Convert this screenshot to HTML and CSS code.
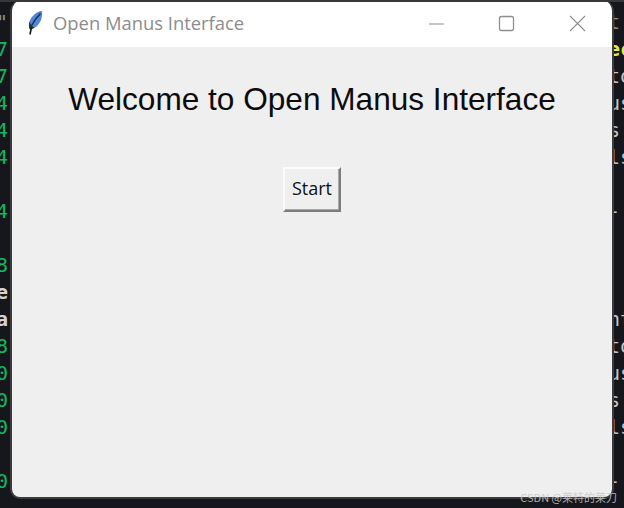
FILE: index.html
```html
<!DOCTYPE html>
<html lang="en">
<head>
<meta charset="utf-8">
<title>Open Manus Interface</title>
<link rel="stylesheet" href="styles.css">
</head>
<body>
<div class="terminal">
  <div class="line"><span class="muted">"</span><span class="muted">t :</span></div>
  <div class="line"><span class="num">7</span><span class="warn">ec</span></div>
  <div class="line"><span class="num">7</span><span class="text">to</span></div>
  <div class="line"><span class="num">4</span><span class="text">us</span></div>
  <div class="line"><span class="num">4</span><span class="text">s</span></div>
  <div class="line"><span class="num">4</span><span class="text">ls</span></div>
  <div class="line"></div>
  <div class="line"><span class="num">4</span><span class="text">-</span></div>
  <div class="line"></div>
  <div class="line"><span class="num">8</span></div>
  <div class="line"><span class="bold">e</span></div>
  <div class="line"><span class="bold">a</span><span class="text">nt</span></div>
  <div class="line"><span class="num">8</span><span class="text">to</span></div>
  <div class="line"><span class="num">0</span><span class="text">us</span></div>
  <div class="line"><span class="num">0</span><span class="text">s</span></div>
  <div class="line"><span class="num">0</span><span class="text">ls</span></div>
  <div class="line"></div>
  <div class="line"><span class="num">0</span><span class="text">-</span></div>
</div>

<div class="window">
  <header class="titlebar">
    <svg class="feather" width="18" height="26" viewBox="0 0 18 26" aria-hidden="true">
      <path d="M16 1C10.500 1.500 5.500 6 3.500 11.500C2.500 15 2.800 17.500 4 19.500C8.500 19 13 15 15 10C16 7 16.300 4 16 1Z" fill="#4f86d6"/>
      <path d="M14.500 3.500C11 7 7.500 11.500 5 16.500" fill="none" stroke="#16305a" stroke-width="1.500"/>
      <path d="M3.500 11.500C2.500 15 2.800 17.500 4 19.500C5.500 19.300 7 18.600 8.500 17.500C5.800 16.500 4.500 14.500 3.500 11.500Z" fill="#2a3442"/>
      <path d="M5.500 17L4 24.500" fill="none" stroke="#14171c" stroke-width="1.600"/>
    </svg>
    <span class="title">Open Manus Interface</span>
    <div class="controls">
      <svg class="control" width="70" height="20" viewBox="0 0 70 20" aria-hidden="true"><path d="M27 11H42" stroke="#8f8f8f" stroke-width="1"/></svg>
      <svg class="control" width="70" height="20" viewBox="0 0 70 20" aria-hidden="true"><rect x="27.500" y="3.500" width="14" height="14" rx="2" fill="none" stroke="#8f8f8f" stroke-width="1.300"/></svg>
      <svg class="control" width="70" height="20" viewBox="0 0 70 20" aria-hidden="true"><path d="M28 3L43 18M43 3L28 18" stroke="#8f8f8f" stroke-width="1.100"/></svg>
    </div>
  </header>
  <main class="content">
    <h1 class="welcome">Welcome to Open Manus Interface</h1>
    <button class="start" type="button">Start</button>
  </main>
</div>

<div class="watermark">CSDN @莱特的莱刀</div>
</body>
</html>
```

FILE: styles.css
```css
* { box-sizing: border-box; }

html, body {
  margin: 0;
  height: 100%;
}

body {
  position: relative;
  width: 624px;
  height: 508px;
  overflow: hidden;
  background: #16171c;
  border-top: 2px solid #38383a;
}

.terminal {
  padding-top: 7px;
  font-family: "DejaVu Sans Mono", "Liberation Mono", monospace;
  font-size: 20px;
  line-height: 27px;
}

.line {
  display: flex;
  justify-content: space-between;
  height: 27px;
  white-space: nowrap;
  overflow: hidden;
}

.line span:nth-child(1) { width: 12px; margin-left: -4px; }
.line span:nth-child(2) { flex: 0 0 16px; min-width: 0; margin-left: auto; }

.num { color: #10b860; }
.warn { color: #e4e84a; font-weight: 700; }
.text { color: #c4c4c4; }
.muted { color: #8d8d8d; }
.bold { color: #d4d4d4; font-weight: 700; }

.window {
  position: absolute;
  left: 10px;
  top: -1px;
  width: 604px;
  height: 498px;
  display: flex;
  flex-direction: column;
  overflow: hidden;
  background: #efefef;
  border: 2px solid #3c3c3e;
  border-top: 0;
  border-radius: 10px;
}

.titlebar {
  display: flex;
  align-items: center;
  flex: 0 0 46px;
  padding: 0 0 2px 14px;
  background: #fff;
  border-radius: 10px 10px 0 0;
}

.feather { flex: none; }

.title {
  margin-left: 9px;
  padding-bottom: 2px;
  font-family: "Open Sans", "Noto Sans", sans-serif;
  font-size: 18.4px;
  color: #8c8c8c;
}

.controls {
  display: flex;
  margin-left: auto;
}

.control { display: block; }

.content {
  display: flex;
  flex-direction: column;
  align-items: center;
  flex: 1;
  padding-top: 33px;
}

.welcome {
  margin: 0;
  font-family: "Liberation Sans", Arial, sans-serif;
  font-size: 31.6px;
  font-weight: 400;
  line-height: 38px;
  color: #0c0c0c;
}

.start {
  width: 58px;
  height: 45px;
  margin-top: 49px;
  padding: 0 0 3px;
  font-family: "Open Sans", "Noto Sans", sans-serif;
  font-size: 18px;
  color: #111;
  background: #efefef;
  border: 2px solid;
  border-color: #fbfbfb #7c7c7c #7c7c7c #fbfbfb;
  box-shadow: inset -1px -1px 0 #a8a8a8;
}

.watermark {
  position: absolute;
  right: 7px;
  bottom: 4px;
  font-family: "Noto Sans CJK SC", "Liberation Sans", sans-serif;
  font-size: 11px;
  line-height: 14px;
  color: #c9c9c9;
  opacity: 0.85;
}
```
